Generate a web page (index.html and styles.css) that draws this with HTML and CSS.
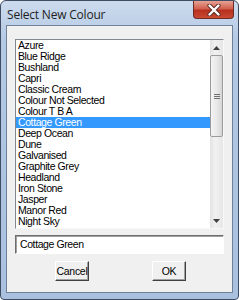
FILE: index.html
```html
<!DOCTYPE html>
<html lang="en">
<head>
    <meta charset="UTF-8">
    <title>Select New Colour</title>
    <link rel="stylesheet" href="styles.css">
</head>
<body>
    <div class="window">
        <div class="titlebar">
            <span class="title">Select New Colour</span>
            <div class="close">
                <svg width="16" height="12" viewBox="0 0 16 12">
                    <path d="M3.5 1.5 L12.5 10.5 M12.5 1.5 L3.5 10.5" stroke="#5a2a26" stroke-width="4.2" stroke-linecap="round"/>
                    <path d="M3.5 1.5 L12.5 10.5 M12.5 1.5 L3.5 10.5" stroke="#ffffff" stroke-width="2.4" stroke-linecap="round"/>
                </svg>
            </div>
        </div>
        <div class="client">
            <div class="listbox">
                <ul class="items">
                    <li>Azure</li>
                    <li>Blue Ridge</li>
                    <li>Bushland</li>
                    <li>Capri</li>
                    <li>Classic Cream</li>
                    <li>Colour Not Selected</li>
                    <li>Colour T B A</li>
                    <li class="selected">Cottage Green</li>
                    <li>Deep Ocean</li>
                    <li>Dune</li>
                    <li>Galvanised</li>
                    <li>Graphite Grey</li>
                    <li>Headland</li>
                    <li>Iron Stone</li>
                    <li>Jasper</li>
                    <li>Manor Red</li>
                    <li>Night Sky</li>
                </ul>
                <div class="scrollbar">
                    <div class="arrow">
                        <svg width="7" height="4" viewBox="0 0 7 4"><path d="M0 4 L3.5 0 L7 4 Z" fill="#404040"/></svg>
                    </div>
                    <div class="track">
                        <div class="thumb">
                            <span class="grip"></span>
                            <span class="grip"></span>
                            <span class="grip"></span>
                        </div>
                    </div>
                    <div class="arrow">
                        <svg width="7" height="4" viewBox="0 0 7 4"><path d="M0 0 L7 0 L3.5 4 Z" fill="#404040"/></svg>
                    </div>
                </div>
            </div>
            <div class="textbox">Cottage Green</div>
            <div class="buttons">
                <button>Cancel</button>
                <button>OK</button>
            </div>
        </div>
    </div>
</body>
</html>
```

FILE: styles.css
```css
body {
    margin: 0;
    padding: 0;
    background-color: #ffffff;
    font-family: "Liberation Sans", Arial, sans-serif;
}
.window {
    box-sizing: border-box;
    width: 239px;
    height: 300px;
    border: 1px solid #3e4d63;
    border-radius: 6px 6px 4px 4px;
    background: linear-gradient(to bottom, #cddbed, #b3c9e4 40px, #a9c1df);
    padding: 0 5px 6px 5px;
    display: flex;
    flex-direction: column;
}
.titlebar {
    height: 24px;
    display: flex;
    justify-content: space-between;
    align-items: flex-start;
}
.title {
    margin: 5px 0 0 1px;
    font-family: "Open Sans", sans-serif;
    font-size: 12px;
    color: #1e1e1e;
    letter-spacing: -0.2px;
}
.close {
    width: 41px;
    height: 18px;
    margin-right: -1px;
    box-sizing: border-box;
    border: 1px solid #6e2b26;
    border-top: none;
    border-radius: 0 0 4px 4px;
    background: linear-gradient(to bottom, #e6a293, #d2604f 45%, #b8301f 55%, #c94a33);
    display: flex;
    justify-content: center;
    align-items: center;
}
.client {
    flex: 1;
    border: 1px solid #6f8099;
    background-color: #f0f0f0;
    padding: 13px 8px 0 8px;
    display: flex;
    flex-direction: column;
}
.listbox {
    height: 190px;
    box-sizing: border-box;
    border: 1px solid;
    border-color: #828790 #f8f8f8 #f8f8f8 #828790;
    background-color: white;
    display: flex;
}
.items {
    flex: 1;
    list-style: none;
    margin: 0;
    padding: 0;
    overflow: hidden;
}
.items li {
    height: 11px;
    line-height: 11px;
    padding-left: 2px;
    font-size: 10.5px;
    letter-spacing: -0.4px;
    color: #000;
    white-space: nowrap;
}
.items li.selected {
    background-color: #3399ff;
    color: white;
}
.scrollbar {
    width: 13px;
    display: flex;
    flex-direction: column;
    background: linear-gradient(to right, #e3e3e3, #f1f1f1 40%, #e6e6e6);
}
.arrow {
    height: 15px;
    display: flex;
    justify-content: center;
    align-items: center;
}
.track {
    flex: 1;
}
.thumb {
    height: 82px;
    box-sizing: border-box;
    border: 1px solid #9b9b9b;
    border-radius: 2px;
    background: linear-gradient(to right, #f4f4f4, #e9e9e9 50%, #d6d6d6);
    display: flex;
    flex-direction: column;
    justify-content: center;
    align-items: center;
    gap: 1px;
}
.grip {
    width: 6px;
    height: 1px;
    background-color: #707070;
}
.textbox {
    margin-top: 6px;
    height: 19px;
    box-sizing: border-box;
    border: 1px solid;
    border-color: #6d6d6d #ffffff #ffffff #6d6d6d;
    box-shadow: inset 1px 1px 0 #a0a0a0;
    background-color: white;
    padding-left: 4px;
    font-size: 10.5px;
    letter-spacing: -0.4px;
    line-height: 17px;
    color: #000;
}
.buttons {
    margin-top: 7px;
    padding: 0 38px 0 40px;
    display: flex;
    justify-content: space-between;
}
button {
    width: 34px;
    height: 20px;
    padding: 0;
    box-sizing: border-box;
    border: 1px solid;
    border-color: #ffffff #404040 #404040 #ffffff;
    box-shadow: inset -1px -1px 0 #a0a0a0;
    background-color: #f0f0f0;
    font-family: "Liberation Sans", Arial, sans-serif;
    font-size: 10.5px;
    letter-spacing: -0.3px;
    color: #000;
}
```
